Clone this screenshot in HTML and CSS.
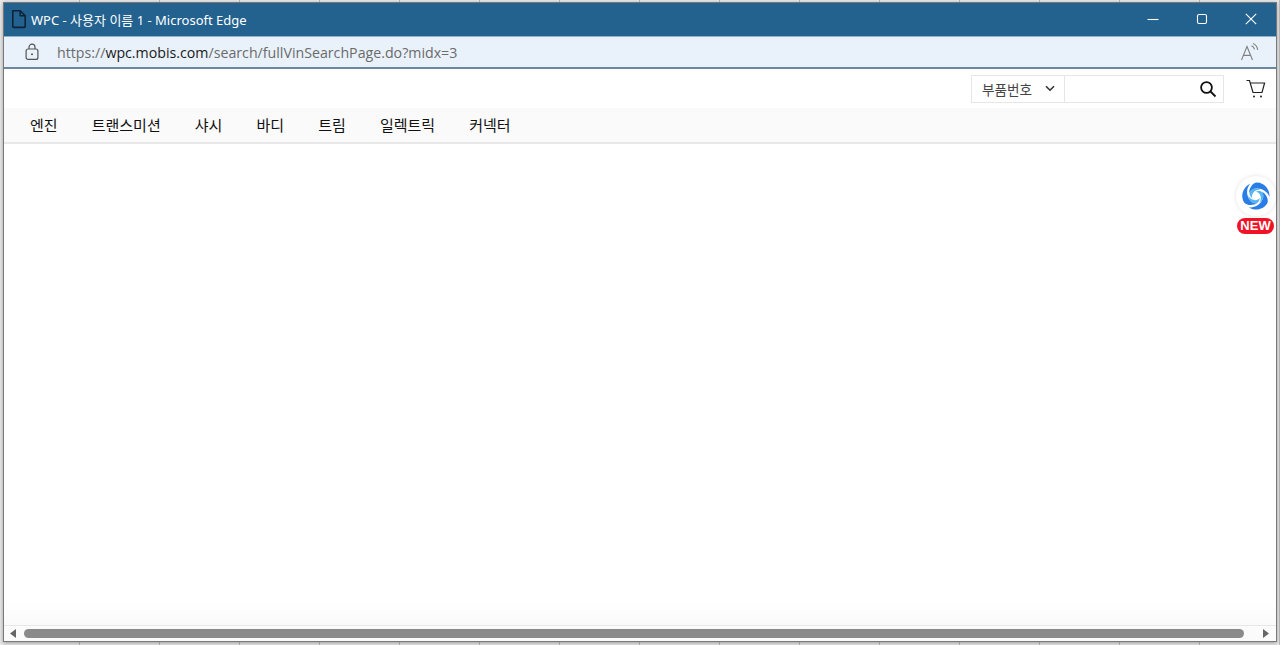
FILE: index.html
```html
<!DOCTYPE html>
<html lang="ko">
<head>
  <meta charset="UTF-8">
  <title>WPC - 사용자 이름 1 - Microsoft Edge</title>
  <link rel="stylesheet" href="styles.css">
</head>
<body>

  <div class="window">

    <!-- Title bar -->
    <header class="titlebar">
      <svg class="page-icon" width="18" height="20" viewBox="0 0 18 20" fill="none" stroke="#0c2338" stroke-width="1.6" stroke-linejoin="round">
        <path d="M2.8 1.8h7.4l5 5v10.6a1 1 0 0 1-1 1H3.8a1 1 0 0 1-1-1z"/>
        <path d="M10.2 1.8v5h5"/>
      </svg>
      <span class="window-title">WPC - 사용자 이름 1 - Microsoft Edge</span>
      <div class="window-controls">
        <svg width="12" height="12" viewBox="0 0 12 12" stroke="#fff" stroke-width="1.1" fill="none"><path d="M0.5 6.5h11"/></svg>
        <svg width="12" height="12" viewBox="0 0 12 12" stroke="#fff" stroke-width="1.1" fill="none"><rect x="1.5" y="1.5" width="9" height="9" rx="1.5"/></svg>
        <svg width="12" height="12" viewBox="0 0 12 12" stroke="#fff" stroke-width="1.1" fill="none"><path d="M0.8 0.8l10.4 10.4M11.2 0.8L0.8 11.2"/></svg>
      </div>
    </header>

    <!-- Address bar -->
    <div class="addressbar">
      <svg class="lock" width="16" height="18" viewBox="0 0 16 18" fill="none" stroke="#555" stroke-width="1.2">
        <rect x="2.1" y="6" width="11.8" height="10.4" rx="2"/>
        <path d="M5 6V4.2a3 3 0 0 1 6 0V6"/>
        <circle cx="8" cy="11.2" r="1" fill="#555" stroke="none"/>
      </svg>
      <div class="url"><span class="url-dim">https://</span>wpc.mobis.com<span class="url-dim">/search/fullVinSearchPage.do?midx=3</span></div>
      <svg class="read-aloud" width="18" height="18" viewBox="0 0 18 18" fill="none" stroke="#808080" stroke-width="1.1">
        <path d="M0.5 17L6 3.500 11.500 17M2.400 12.400h7.200"/>
        <path d="M10.500 2.800a5 5 0 0 1 3 3.600M12 0.600a7.500 7.500 0 0 1 4.600 6.400"/>
      </svg>
    </div>

    <!-- Page -->
    <main class="page">
      <div class="toolbar">
        <form class="search">
          <div class="search-type">
            <span>부품번호</span>
            <svg width="10" height="7" viewBox="0 0 10 7" fill="none" stroke="#333" stroke-width="1.6"><path d="M1 1.200l4 4 4-4"/></svg>
          </div>
          <div class="search-input">
            <svg width="18" height="18" viewBox="0 0 18 18" fill="none" stroke="#111" stroke-width="1.8"><circle cx="7.500" cy="7.500" r="5.400"/><path d="M11.500 11.500l5 5"/></svg>
          </div>
        </form>
        <svg class="cart" width="20" height="20" viewBox="0 0 20 20" fill="none" stroke="#222" stroke-width="1.2">
          <path d="M0.500 1.500h3l3.500 12h9l2.600-9.500H4.400"/>
          <circle cx="8" cy="17.400" r="1" fill="#222" stroke="none"/>
          <circle cx="15" cy="17.400" r="1" fill="#222" stroke="none"/>
        </svg>
      </div>

      <nav class="menu">
        <a href="#">엔진</a>
        <a href="#">트랜스미션</a>
        <a href="#">샤시</a>
        <a href="#">바디</a>
        <a href="#">트림</a>
        <a href="#">일렉트릭</a>
        <a href="#">커넥터</a>
      </nav>

      <div class="content"></div>

      <!-- Floating button -->
      <div class="float-btn">
        <div class="float-circle">
          <svg width="30" height="30" viewBox="0 0 30 30">
            <defs>
              <path id="swirlArm" d="M16 1.500C23 1.500 29 8 28.500 16 26.500 10.500 21.500 7.500 16 7.500 12.500 7.500 9.500 9.500 8 12 8.500 6.500 11.500 2 16 1.500z"/>
            </defs>
            <g fill="#2a7de6">
              <use href="#swirlArm"/>
              <use href="#swirlArm" transform="rotate(120 15 15)"/>
              <use href="#swirlArm" transform="rotate(240 15 15)"/>
            </g>
            <g fill="#58b4f0">
              <use href="#swirlArm" transform="rotate(60 15 15) translate(15 15) scale(.55) translate(-15 -15)"/>
              <use href="#swirlArm" transform="rotate(180 15 15) translate(15 15) scale(.55) translate(-15 -15)"/>
              <use href="#swirlArm" transform="rotate(300 15 15) translate(15 15) scale(.55) translate(-15 -15)"/>
            </g>
          </svg>
        </div>
        <span class="new-badge">NEW</span>
      </div>
    </main>

    <!-- Horizontal scrollbar -->
    <div class="hscroll">
      <svg width="6" height="9" viewBox="0 0 6 9"><path d="M6 0v9L0 4.500z" fill="#666"/></svg>
      <div class="hscroll-thumb"></div>
      <svg width="6" height="9" viewBox="0 0 6 9"><path d="M0 0v9l6-4.500z" fill="#666"/></svg>
    </div>
  </div>

</body>
</html>
```

FILE: styles.css
```css
html, body {
  height: 100%;
}

body {
  margin: 0;
  padding: 2px 3px 3px 3px;
  box-sizing: border-box;
  background-color: #e9e9e9;
  background-image: repeating-linear-gradient(90deg, #e9e9e9 0, #e9e9e9 79px, #bbb 79px, #bbb 80px);
  font-family: "Noto Sans CJK KR", "Noto Sans", sans-serif;
  overflow: hidden;
}

.window {
  height: 100%;
  display: flex;
  flex-direction: column;
  background-color: #fff;
  border: 1px solid #77797b;
  box-sizing: border-box;
  box-shadow: 0 1px 4px rgba(0, 0, 0, 0.35);
}

.titlebar {
  flex: none;
  height: 33px;
  display: flex;
  align-items: center;
  background-color: #23628f;
  color: #fff;
  padding-left: 6px;
  padding-bottom: 1px;
  box-sizing: border-box;
}

.page-icon {
  margin-right: 3px;
}

.window-title {
  font-family: "Noto Sans", "Noto Sans CJK KR", sans-serif;
  font-size: 13px;
  white-space: nowrap;
}

.window-controls {
  margin-left: auto;
  display: flex;
  gap: 37px;
  padding-right: 19px;
}

.addressbar {
  flex: none;
  height: 30px;
  display: flex;
  align-items: center;
  background-color: #e9f2fb;
  border-top: 1px solid #8fb0c9;
  border-bottom: 2px solid #6a879f;
  padding-left: 20px;
}

.lock {
  margin-right: 17px;
}

.url {
  font-family: "Open Sans", "Noto Sans", sans-serif;
  font-size: 14.2px;
  color: #1a1a1a;
}

.url-dim {
  color: #6b6b6b;
}

.read-aloud {
  margin-left: auto;
  margin-right: 17px;
}

.page {
  flex: 1;
  position: relative;
  display: flex;
  flex-direction: column;
  min-height: 0;
}

.toolbar {
  flex: none;
  height: 39px;
  display: flex;
  align-items: center;
  justify-content: flex-end;
  padding-right: 10px;
  gap: 22px;
}

.search {
  display: flex;
  height: 28px;
  width: 253px;
  box-sizing: border-box;
  border: 1px solid #e6e6e6;
  margin: 0;
}

.search-type {
  width: 93px;
  box-sizing: border-box;
  display: flex;
  align-items: center;
  justify-content: space-between;
  padding: 0 9px 0 10px;
  border-right: 1px solid #e6e6e6;
  font-size: 13.6px;
  color: #444;
}

.search-input {
  flex: 1;
  display: flex;
  align-items: center;
  justify-content: flex-end;
  padding-right: 6px;
}

.menu {
  flex: none;
  height: 32px;
  padding-bottom: 2px;
  display: flex;
  align-items: center;
  gap: 34.1px;
  padding-left: 26px;
  background-color: #fafafa;
  border-bottom: 2px solid #e8e8e8;
}

.menu a {
  font-size: 15px;
  color: #111;
  text-decoration: none;
}

.content {
  flex: 1;
  background: linear-gradient(to bottom, #fff 95%, #fafafa);
}

.float-btn {
  position: absolute;
  top: 107px;
  right: 0;
  width: 41px;
  display: flex;
  flex-direction: column;
  align-items: center;
}

.float-circle {
  width: 40px;
  height: 40px;
  flex: none;
  border-radius: 50%;
  background-color: #fff;
  box-shadow: 0 0 4px rgba(0, 0, 0, 0.12);
  display: flex;
  align-items: center;
  justify-content: center;
}

.new-badge {
  margin-top: 2px;
  background-color: #f01325;
  color: #fff;
  font-family: "Liberation Sans", sans-serif;
  font-size: 13px;
  font-weight: bold;
  line-height: 16px;
  padding: 0 3px;
  border-radius: 8px;
}

.hscroll {
  flex: none;
  height: 16px;
  display: flex;
  align-items: center;
  gap: 8px;
  padding: 0 7px 1px 6px;
  background-color: #fbfbfb;
  border-top: 1px solid #e8e8e8;
  box-sizing: border-box;
}

.hscroll-thumb {
  flex: 1;
  height: 9px;
  margin-right: 11px;
  border-radius: 5px;
  background-color: #8a8a8a;
}
```
